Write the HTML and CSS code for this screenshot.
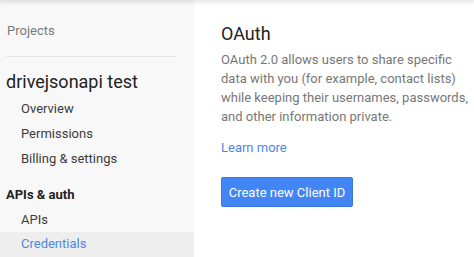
FILE: index.html
```html
<!DOCTYPE html>
<html>
<head>
<meta charset="utf-8">
<link rel="stylesheet" href="styles.css">
</head>
<body>
<div class="topbar"></div>
<div class="app">
  <nav class="sidebar">
    <div class="projects">Projects</div>
    <div class="project-name">drivejsonapi test</div>
    <ul class="nav">
      <li class="nav-item">Overview</li>
      <li class="nav-item">Permissions</li>
      <li class="nav-item">Billing &amp; settings</li>
    </ul>
    <div class="section">APIs &amp; auth</div>
    <ul class="nav">
      <li class="nav-item">APIs</li>
      <li class="nav-item active">Credentials</li>
    </ul>
  </nav>
  <main class="main">
    <h1 class="title">OAuth</h1>
    <p class="desc">OAuth 2.0 allows users to share specific data with you (for example, contact lists) while keeping their usernames, passwords, and other information private.</p>
    <a class="learn" href="#">Learn more</a>
    <div class="actions"><button class="btn">Create new Client ID</button></div>
  </main>
</div>
</body>
</html>
```
FILE: styles.css
```css
html, body {
  margin: 0;
  padding: 0;
  height: 100%;
  overflow: hidden;
}
body {
  font-family: Roboto, "Liberation Sans", Arial, sans-serif;
  font-size: 13px;
  background: #fff;
}
.topbar {
  position: relative;
  z-index: 2;
  height: 0;
  box-shadow: 0 0 4px 2px rgba(0,0,0,0.13);
}
.app {
  display: flex;
  height: 257px;
}
.sidebar {
  width: 194px;
  flex: none;
  background: #f8f8f8;
  box-sizing: border-box;
  padding-top: 21px;
}
.projects {
  color: #7a7a7a;
  line-height: 20px;
  margin: 0 18px 0 6px;
  padding-left: 1px;
  padding-bottom: 15px;
  border-bottom: 1px solid #e6e6e6;
}
.project-name {
  font-size: 18px;
  line-height: 24px;
  color: #222;
  margin-top: 13px;
  padding-left: 6px;
}
.nav {
  list-style: none;
  margin: 2px 0 0;
  padding: 0;
}
.nav-item {
  line-height: 25px;
  height: 25px;
  padding-left: 21px;
  color: #3c3c3c;
}
.nav-item.active {
  background: #eeeeee;
  color: #4f86e3;
  height: 26px;
  line-height: 24px;
}
.section {
  font-weight: bold;
  color: #222;
  line-height: 24px;
  margin-top: 12px;
  padding-left: 6px;
}
.section + .nav { margin-top: 0; }
.main {
  flex: 1;
  padding: 22px 0 0 27px;
}
.title {
  font-size: 18px;
  font-weight: normal;
  line-height: 24px;
  color: #222;
  margin: 0;
}
.desc {
  margin: 4px 0 0;
  color: #777;
  line-height: 19px;
  max-width: 252px;
}
.learn {
  display: block;
  margin-top: 12px;
  line-height: 19px;
  color: #4f86e3;
  text-decoration: none;
}
.actions {
  margin-top: 20px;
}
.btn {
  font-family: Roboto, "Liberation Sans", Arial, sans-serif;
  font-size: 13px;
  color: #fff;
  background: #4285f4;
  border: 1px solid #3a79e0;
  border-radius: 2px;
  width: 132px;
  height: 30px;
  padding: 0;
}
```
